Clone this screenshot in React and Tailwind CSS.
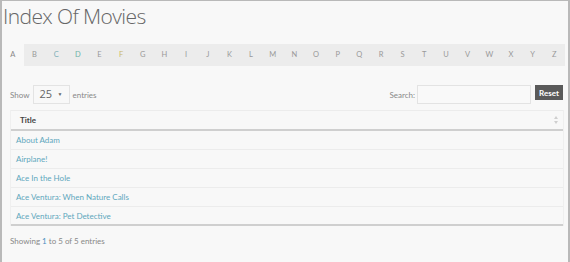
const letters = 'ABCDEFGHIJKLMNOPQRSTUVWXYZ'.split('')
const tint = { C: 'text-[#7fb0b8]', D: 'text-[#6fb3a8]', F: 'text-[#c9b86a]' }

const movies = [
  'About Adam',
  'Airplane!',
  'Ace In the Hole',
  'Ace Ventura: When Nature Calls',
  'Ace Ventura: Pet Detective',
]

export default function App() {
  return (
    <div className="w-[570px] h-[262px] bg-[#f8f8f8] border-t border-l-2 border-r-2 border-[#b9b9b9] font-['Lato',sans-serif] text-[#777] overflow-hidden">
      <h1 className="pl-[1px] pt-[1px] h-[43px] text-[21px] leading-[28px] font-light text-[#666] tracking-[-0.6px] font-['Open_Sans',sans-serif]">Index Of Movies</h1>

      <div className="flex h-[22px] bg-[#ececec] mr-[3px]">
        {letters.map(l => (
          <div
            key={l}
            className={`flex-1 flex items-center justify-center text-[7.5px] ${l === 'A' ? 'bg-[#f8f8f8] text-[#888]' : tint[l] || 'text-[#999]'}`}
          >
            {l}
          </div>
        ))}
      </div>

      <div className="flex items-center justify-between pl-[8px] pr-[5px] mt-[19px] h-[19px]">
        <div className="flex items-center text-[8px] text-[#888]">
          <span>Show</span>
          <div className="ml-[3px] w-[37px] h-[19px] bg-[#f8f8f8] border border-[#e3e3e3] flex items-center justify-between px-[6px]">
            <span className="text-[11px] text-[#666] font-['Open_Sans',sans-serif]">25</span>
            <span className="text-[5px] text-[#666]">▼</span>
          </div>
          <span className="ml-[3px]">entries</span>
        </div>
        <div className="flex items-center text-[8px] text-[#888]">
          <span>Search:</span>
          <div className="ml-[2px] w-[114px] h-[19px] bg-[#f9f9f9] border border-[#e3e3e3]" />
          <button className="ml-[4px] self-start w-[28px] h-[15px] bg-[#5a5a5a] text-white text-[8px] font-bold">Reset</button>
        </div>
      </div>

      <div className="mx-[8px] mt-[6px] mr-[4px] border-x border-[#efefef]">
        <div className="h-[21px] flex items-center justify-between pl-[9px] pr-[5px] border-t border-[#ececec] border-b-2 border-b-[#cfcfcf]">
          <span className="text-[8px] font-bold text-[#444]">Title</span>
          <svg width="4" height="8" viewBox="0 0 4 8">
            <path d="M2 0 L4 3 L0 3 Z" fill="#cfcfcf" />
            <path d="M2 8 L4 5 L0 5 Z" fill="#cfcfcf" />
          </svg>
        </div>
        {movies.map((m, i) => (
          <div
            key={m}
            className={`h-[19px] flex items-center pl-[5px] text-[8px] text-[#5ea7bd] ${i === movies.length - 1 ? 'border-b-2 border-[#cfcfcf]' : 'border-b border-[#ececec]'}`}
          >
            {m}
          </div>
        ))}
      </div>

      <div className="pl-[8px] mt-[9px] text-[8px] text-[#888]">
        Showing <span className="text-[#4a8fc0]">1</span> to 5 of 5 entries
      </div>
    </div>
  )
}
